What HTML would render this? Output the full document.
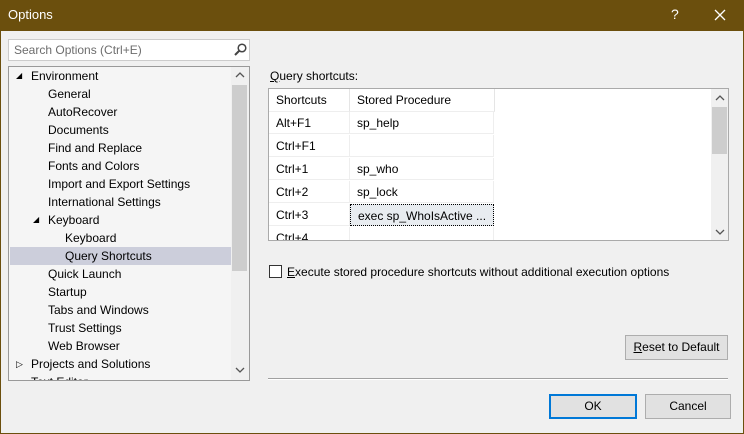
<!DOCTYPE html><html><head><style>
*{margin:0;padding:0;box-sizing:border-box}
body{width:744px;height:434px;background:#f0f0f0;font-family:"Liberation Sans",sans-serif;font-size:12px;color:#000;position:relative;overflow:hidden}
.a{position:absolute;white-space:nowrap}
.tb{left:0;top:0;width:744px;height:31px;background:#6b4f0d;color:#fff}
.r{position:absolute;height:18px;line-height:18px;left:0;width:220px}
.cell{position:absolute;height:22px;line-height:22px;padding-left:7px;background:#fff;border-right:1px solid #eee;border-bottom:1px solid #eee}
.btn{position:absolute;background:#e1e1e1;border:1px solid #adadad;text-align:center;line-height:22px}
</style></head><body>
<div class="a" style="left:0;top:0;width:744px;height:434px;border:1px solid #6b4f0d"></div>
<div class="a tb"><span class="a" style="left:8px;top:7px;font-size:13px">Options</span><span class="a" style="left:671px;top:6px;font-size:14px">?</span>
<svg class="a" style="left:714px;top:9px" width="12" height="12"><path d="M1 1L11 11M11 1L1 11" stroke="#fff" stroke-width="1.3"/></svg></div>
<div class="a" style="left:8px;top:39px;width:242px;height:22px;background:#fff;border:1px solid #ccc"><span class="a" style="left:5px;top:3px;color:#6d6d6d">Search Options (Ctrl+E)</span>
<svg class="a" style="left:224px;top:3px" width="14" height="14"><circle cx="9" cy="5" r="3.8" fill="none" stroke="#444" stroke-width="1.5"/><path d="M6.5 7.5L2 12" stroke="#444" stroke-width="2"/></svg></div>
<div class="a" style="left:8px;top:66px;width:242px;height:315px;background:#f5f5f5;border:1px solid #999;overflow:hidden">
<div class="a" style="left:222px;top:0;width:18px;height:313px;background:#f0f0f0"></div>
<div class="a" style="left:223px;top:18px;width:15px;height:186px;background:#cdcdcd"></div>
<svg class="a" style="left:226px;top:5px" width="10" height="6"><path d="M1 5L5 1L9 5" stroke="#555" stroke-width="1.3" fill="none"/></svg>
<svg class="a" style="left:226px;top:300px" width="10" height="6"><path d="M1 1L5 5L9 1" stroke="#555" stroke-width="1.3" fill="none"/></svg>
<div class="a" style="left:1px;top:180px;width:221px;height:18px;background:#cccedb"></div>
<div style="position:absolute;left:-1px;top:0">
<div class="r" style="top:0"><span class="a" style="left:8px;font-size:8px">&#9698;</span><span class="a" style="left:23px">Environment</span></div>
<div class="r" style="top:18px"><span class="a" style="left:40px">General</span></div>
<div class="r" style="top:36px"><span class="a" style="left:40px">AutoRecover</span></div>
<div class="r" style="top:54px"><span class="a" style="left:40px">Documents</span></div>
<div class="r" style="top:72px"><span class="a" style="left:40px">Find and Replace</span></div>
<div class="r" style="top:90px"><span class="a" style="left:40px">Fonts and Colors</span></div>
<div class="r" style="top:108px"><span class="a" style="left:40px">Import and Export Settings</span></div>
<div class="r" style="top:126px"><span class="a" style="left:40px">International Settings</span></div>
<div class="r" style="top:144px"><span class="a" style="left:25px;font-size:8px">&#9698;</span><span class="a" style="left:40px">Keyboard</span></div>
<div class="r" style="top:162px"><span class="a" style="left:57px">Keyboard</span></div>
<div class="r" style="top:180px"><span class="a" style="left:57px">Query Shortcuts</span></div>
<div class="r" style="top:198px"><span class="a" style="left:40px">Quick Launch</span></div>
<div class="r" style="top:216px"><span class="a" style="left:40px">Startup</span></div>
<div class="r" style="top:234px"><span class="a" style="left:40px">Tabs and Windows</span></div>
<div class="r" style="top:252px"><span class="a" style="left:40px">Trust Settings</span></div>
<div class="r" style="top:270px"><span class="a" style="left:40px">Web Browser</span></div>
<div class="r" style="top:288px"><span class="a" style="left:8px;font-size:9px">&#9655;</span><span class="a" style="left:23px">Projects and Solutions</span></div>
<div class="r" style="top:306px"><span class="a" style="left:23px">Text Editor</span></div>
</div></div>
<span class="a" style="left:270px;top:69px"><u>Q</u>uery shortcuts:</span>
<div class="a" style="left:268px;top:88px;width:461px;height:153px;background:#fff;border:1px solid #aaa;overflow:hidden">
<div class="cell" style="left:0;top:0;width:81px;height:23px;line-height:23px;border-right:1px solid #e5e5e5">Shortcuts</div>
<div class="cell" style="left:81px;top:0;width:145px;height:23px;line-height:23px;border-right:1px solid #e5e5e5">Stored Procedure</div>
<div class="cell" style="left:0;top:23px;width:81px">Alt+F1</div><div class="cell" style="left:81px;top:23px;width:144px">sp_help</div>
<div class="cell" style="left:0;top:46px;width:81px">Ctrl+F1</div><div class="cell" style="left:81px;top:46px;width:144px"></div>
<div class="cell" style="left:0;top:69px;width:81px">Ctrl+1</div><div class="cell" style="left:81px;top:69px;width:144px">sp_who</div>
<div class="cell" style="left:0;top:92px;width:81px">Ctrl+2</div><div class="cell" style="left:81px;top:92px;width:144px">sp_lock</div>
<div class="cell" style="left:0;top:115px;width:81px">Ctrl+3</div><div class="cell" style="left:81px;top:115px;width:144px;background:#e8ecf0;border:1px dotted #000">exec sp_WhoIsActive ...</div>
<div class="cell" style="left:0;top:138px;width:81px">Ctrl+4</div><div class="cell" style="left:81px;top:138px;width:144px"></div>
<div class="a" style="left:442px;top:0;width:17px;height:151px;background:#f0f0f0"></div>
<div class="a" style="left:443px;top:18px;width:15px;height:47px;background:#cdcdcd"></div>
<svg class="a" style="left:446px;top:6px" width="10" height="6"><path d="M1 5L5 1L9 5" stroke="#555" stroke-width="1.3" fill="none"/></svg>
<svg class="a" style="left:446px;top:140px" width="10" height="6"><path d="M1 1L5 5L9 1" stroke="#555" stroke-width="1.3" fill="none"/></svg>
</div>
<div class="a" style="left:269px;top:265px;width:13px;height:13px;background:#fff;border:1px solid #333"></div>
<span class="a" style="left:287px;top:265px"><u>E</u>xecute stored procedure shortcuts without additional execution options</span>
<div class="btn" style="left:625px;top:335px;width:103px;height:25px"><u>R</u>eset to Default</div>
<div class="a" style="left:268px;top:378px;width:460px;height:1px;background:#a0a0a0"></div>
<div class="a" style="left:268px;top:379px;width:460px;height:1px;background:#fff"></div>
<div class="btn" style="left:549px;top:394px;width:88px;height:25px;border:2px solid #0078d7;line-height:21px">OK</div>
<div class="btn" style="left:645px;top:394px;width:86px;height:25px">Cancel</div>
</body></html>
